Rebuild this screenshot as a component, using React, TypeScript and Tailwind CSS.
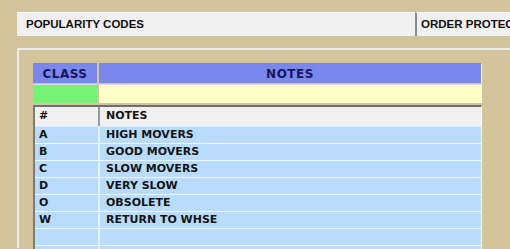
const rows = [
  { c: "A", n: "HIGH MOVERS" },
  { c: "B", n: "GOOD MOVERS" },
  { c: "C", n: "SLOW MOVERS" },
  { c: "D", n: "VERY SLOW" },
  { c: "O", n: "OBSOLETE" },
  { c: "W", n: "RETURN TO WHSE" },
  { c: "", n: "" },
  { c: "", n: "" },
];

export default function App() {
  return (
    <div className="h-[249px] w-[510px] overflow-hidden bg-[#d3c49b] pl-[17px] pt-[12px]">
      {/* tabs */}
      <div className="flex h-[24px] overflow-hidden bg-[#f0f0f0] font-['Liberation_Sans',Arial,sans-serif] text-[11.5px] font-bold text-[#111]">
        <div className="flex w-[398px] shrink-0 items-center border-t border-white pl-[9px]">POPULARITY CODES</div>
        <div className="flex min-w-0 flex-1 items-center overflow-hidden whitespace-nowrap border-l-2 border-t border-l-[#8a8a8a] border-t-white pl-[4px]">
          ORDER PROTECTION
        </div>
      </div>

      {/* panel */}
      <div className="mt-[12px] h-[200px] border-l-2 border-t-2 border-[#ececec] pl-[14px] pt-[13px]">
        <div className="w-[449px] font-['DejaVu_Sans',Verdana,sans-serif] font-bold">
          {/* column headers */}
          <div className="flex h-[20px] gap-[2px] text-[12px] tracking-[0.5px] text-[#16165a]">
            <div className="flex w-[64px] items-center justify-center border-t border-[#8c8c8c] bg-[#7a87ed] pt-[1px]">
              CLASS
            </div>
            <div className="flex flex-1 items-center justify-center border-t border-r border-[#8c8c8c] border-r-white bg-[#7a87ed] pt-[1px]">
              NOTES
            </div>
          </div>
          {/* filter row */}
          <div className="mt-[1px] flex h-[19px] gap-[2px]">
            <div className="w-[64px] border-t border-[#dcdcdc] bg-[#76f276]" />
            <div className="flex-1 border-t border-r border-[#dcdcdc] border-r-white bg-[#ffffc6]" />
          </div>

          {/* grid */}
          <div className="mt-[2px] border-l-2 border-t-2 border-r border-l-[#7a7a7a] border-t-[#6e6e6e] border-r-white text-[11px] text-[#141414]">
            <div className="flex h-[20px] border-b border-[#d6ecff] bg-[#f0f0f0]">
              <div className="flex w-[65px] items-center border-r-2 border-[#9a9a9a] pl-[4px]">#</div>
              <div className="flex flex-1 items-center pl-[6px]">NOTES</div>
            </div>
            {rows.map((r, i) => (
              <div key={i} className="flex h-[17px] border-b border-[#eef6ff] bg-[#b9dcfd]">
                <div className="flex w-[65px] items-center border-r-2 border-[#e4f1ff] pl-[4px]">{r.c}</div>
                <div className="flex flex-1 items-center pl-[6px]">{r.n}</div>
              </div>
            ))}
          </div>
        </div>
      </div>
    </div>
  );
}
